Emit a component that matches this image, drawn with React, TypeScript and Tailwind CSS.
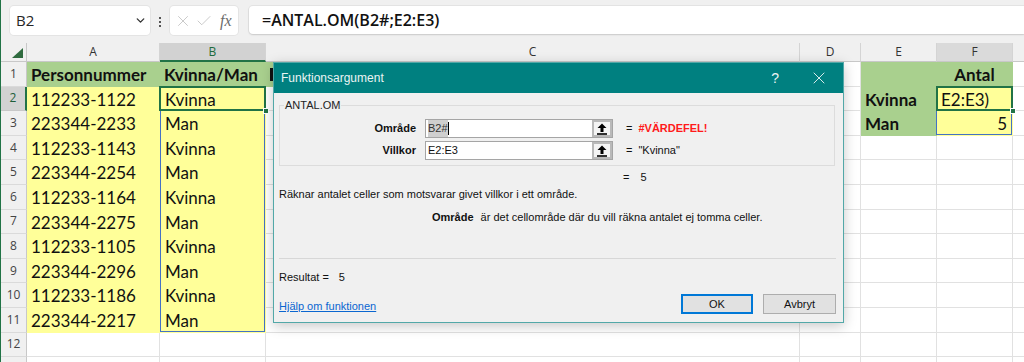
import React from 'react';
import { X, Check, ChevronDown } from 'lucide-react';

const people: [string, string][] = [
  ['112233-1122', 'Kvinna'],
  ['223344-2233', 'Man'],
  ['112233-1143', 'Kvinna'],
  ['223344-2254', 'Man'],
  ['112233-1164', 'Kvinna'],
  ['223344-2275', 'Man'],
  ['112233-1105', 'Kvinna'],
  ['223344-2296', 'Man'],
  ['112233-1186', 'Kvinna'],
  ['223344-2217', 'Man'],
];

const FILL = {
  white: 'bg-white border-[#e1e1e1]',
  green: 'bg-[#a9d08e] border-[#a9d08e]',
  yellow: 'bg-[#ffff99] border-[#ffff99]',
};

type Fill = keyof typeof FILL;

const Cell: React.FC<{ w: string; fill?: Fill; className?: string; children?: React.ReactNode }> = ({
  w,
  fill = 'white',
  className = '',
  children,
}) => (
  <div className={`${w} shrink-0 h-full relative flex items-center border-r border-b px-[4px] pt-[2px] text-[17px] text-[#111] whitespace-nowrap ${FILL[fill]} ${className}`}>
    {children}
  </div>
);

const RowHead: React.FC<{ n?: number; active?: boolean }> = ({ n, active }) => (
  <div
    className={`w-[26px] shrink-0 h-full flex items-center justify-center border-b text-[12px] font-['Open_Sans',sans-serif] ${
      active
        ? 'bg-[#d2d2d2] text-[#1e5e3a] border-[#c8c8c8] border-r-2 border-r-[#217346]'
        : 'bg-[#f0f0f0] text-[#444] border-[#dadada] border-r border-r-[#c8c8c8]'
    }`}
  >
    {n}
  </div>
);

const ColHead: React.FC<{ w: string; label?: string; mode?: 'sel' | 'hi' }> = ({ w, label, mode }) => (
  <div
    className={`${w} shrink-0 h-full flex items-center justify-center border-r border-[#d4d4d4] text-[12px] font-['Open_Sans',sans-serif] ${
      mode === 'sel'
        ? 'bg-[#d2d2d2] text-[#1e6b3c] border-b-2 border-b-[#217346]'
        : mode === 'hi'
        ? 'bg-[#dadada] text-[#333] border-b border-b-[#c8c8c8]'
        : 'bg-[#f0f0f0] text-[#333] border-b border-b-[#c8c8c8]'
    }`}
  >
    {label}
  </div>
);

const Handle = () => (
  <div className="absolute -right-[4px] -bottom-[4px] w-[6px] h-[6px] bg-[#217346] border border-white z-10" />
);

const UpArrow = () => (
  <svg width="10" height="12" viewBox="0 0 10 12">
    <path d="M5 0.5 L9.5 5 H6.5 V9 H3.5 V5 H0.5 Z" fill="#000" />
    <rect x="0" y="10.2" width="10" height="1.6" fill="#000" />
  </svg>
);

const FormulaBar = () => (
  <div className="h-[43px] bg-[#f0f0f0] flex items-start pt-[6px] pl-[9px] font-['Open_Sans',sans-serif]">
    <div className="w-[140px] h-[29px] bg-white rounded-[4px] shadow-[0_0_0_1px_#e4e4e4] flex items-center justify-between pl-[6px] pr-[3px]">
      <span className="text-[15px] text-[#262626]">B2</span>
      <ChevronDown size={13} strokeWidth={2.5} color="#333" />
    </div>
    <div className="ml-[9px] mt-[11px] flex flex-col gap-[2px]">
      <div className="w-[2px] h-[2px] bg-[#555]" />
      <div className="w-[2px] h-[2px] bg-[#555]" />
      <div className="w-[2px] h-[2px] bg-[#555]" />
    </div>
    <div className="ml-[9px] w-[68px] h-[29px] bg-white rounded-[4px] shadow-[0_0_0_1px_#e4e4e4] flex items-center pl-[4px] gap-[3px]">
      <X size={18} strokeWidth={1} color="#b8b8b8" />
      <Check size={18} strokeWidth={1} color="#b8b8b8" />
      <span className="ml-[4px] font-['Liberation_Serif',serif] italic text-[16px] text-[#6b6b6b]">fx</span>
    </div>
    <div className="ml-[11px] flex-1 h-[28px] bg-white rounded-l-[4px] shadow-[0_1px_2px_rgba(0,0,0,0.12),0_0_0_1px_#e4e4e4] flex items-center pl-[13px]">
      <span className="text-[16px] font-semibold text-[#111]">=ANTAL.OM(B2#;E2:E3)</span>
    </div>
  </div>
);

const Sheet = () => (
  <div className="font-['Lato',sans-serif]">
    <div className="h-[19px] flex">
      <div className="w-[26px] shrink-0 h-full bg-[#f0f0f0] border-r border-b border-[#c8c8c8] flex items-end justify-end pr-[3px] pb-[3px]">
        <svg width="11" height="10" viewBox="0 0 11 10">
          <polygon points="11,0 11,10 0,10" fill="#2f6b3f" />
        </svg>
      </div>
      <ColHead w="w-[133px]" label="A" />
      <ColHead w="w-[106px]" label="B" mode="sel" />
      <ColHead w="w-[534px]" label="C" />
      <ColHead w="w-[61px]" label="D" />
      <ColHead w="w-[76px]" label="E" />
      <ColHead w="w-[76px]" label="F" mode="hi" />
      <ColHead w="w-[40px]" />
    </div>

    {/* rad 1 */}
    <div className="h-[24.6px] flex">
      <RowHead n={1} />
      <Cell w="w-[133px]" fill="green" className="font-bold">Personnummer</Cell>
      <Cell w="w-[106px]" fill="green" className="font-bold">Kvinna/Man</Cell>
      <Cell w="w-[534px]" fill="green">
        <div className="w-[3px] h-[13px] bg-[#111]" />
      </Cell>
      <Cell w="w-[61px]" />
      <Cell w="w-[76px]" fill="green" />
      <Cell w="w-[76px]" fill="green" className="font-bold justify-center">Antal</Cell>
      <Cell w="w-[40px]" />
    </div>

    {people.map(([pnr, kon], i) => {
      const n = i + 2;
      return (
        <div key={n} className="h-[24.6px] flex">
          <RowHead n={n} active={n === 2} />
          <Cell w="w-[133px]" fill="yellow">{pnr}</Cell>
          <Cell w="w-[106px]" fill="yellow" className="pl-[5px]">
            {kon}
            {n === 2 ? (
              <>
                <div className="absolute -left-px -top-px -right-px -bottom-px border-2 border-[#217346] z-10" />
                <Handle />
              </>
            ) : (
              <div className={`absolute inset-x-0 -top-px bottom-0 border-x border-[#4472c4] ${n === 11 ? 'border-b' : ''}`} />
            )}
          </Cell>
          <Cell w="w-[534px]" />
          <Cell w="w-[61px]" />
          {n === 2 && (
            <>
              <Cell w="w-[76px]" fill="green" className="font-bold">Kvinna</Cell>
              <Cell w="w-[76px]" fill="yellow">
                E2:E3)
                <div className="absolute -left-px -top-px -right-px -bottom-px border-2 border-[#217346] z-10" />
                <Handle />
              </Cell>
            </>
          )}
          {n === 3 && (
            <>
              <Cell w="w-[76px]" fill="green" className="font-bold">Man</Cell>
              <Cell w="w-[76px]" fill="yellow" className="justify-end pr-[5px]">
                5
                <div className="absolute -left-px -top-px right-0 bottom-0 border-x border-b border-[#4472c4]" />
              </Cell>
            </>
          )}
          {n > 3 && (
            <>
              <Cell w="w-[76px]" />
              <Cell w="w-[76px]" />
            </>
          )}
          <Cell w="w-[40px]" />
        </div>
      );
    })}

    {[12, 0].map((n) => (
      <div key={n} className="h-[24.6px] flex">
        <RowHead n={n || undefined} />
        <Cell w="w-[133px]" />
        <Cell w="w-[106px]" />
        <Cell w="w-[534px]" />
        <Cell w="w-[61px]" />
        <Cell w="w-[76px]" />
        <Cell w="w-[76px]" />
        <Cell w="w-[40px]" />
      </div>
    ))}
  </div>
);

const ArgInput: React.FC<{ children: React.ReactNode }> = ({ children }) => (
  <div className="ml-[9px] w-[188px] h-[19px] flex border border-[#a5a5a5] bg-white">
    <div className="flex-1 flex items-center pl-[2px] text-[11px]">{children}</div>
    <div className="w-[20px] h-full border-2 border-[#b9b9b9] bg-[#f4f4f4] flex items-center justify-center">
      <UpArrow />
    </div>
  </div>
);

const Dialog = () => (
  <div className="absolute left-[272px] top-[62px] w-[571px] h-[261px] z-20 bg-[#f0f0f0] border border-[#52a8a8] shadow-[0_3px_12px_rgba(0,0,0,0.22)] font-['Liberation_Sans',Arial,sans-serif] text-[11px] text-[#111] flex flex-col">
    <div className="h-[30px] shrink-0 bg-[#008080] flex items-center pl-[7px] pr-[14px] text-white">
      <span className="text-[12px] text-[#eaf4f4]">Funktionsargument</span>
      <span className="ml-auto text-[14px] text-[#eaf4f4]">?</span>
      <X className="ml-[30px]" size={20} strokeWidth={1.1} color="#eaf4f4" />
    </div>

    <div className="pl-[5px] pr-[8px] flex flex-col">
      <div className="relative mt-[12px] w-[556px] h-[61px] border border-[#dcdcdc] flex flex-col pt-[13px] gap-[3px]">
        <span className="absolute -top-[7px] left-[4px] px-[1px] bg-[#f0f0f0] text-[11px] leading-[13px] text-[#222]">ANTAL.OM</span>
        <div className="flex items-center">
          <span className="w-[136px] text-right font-bold">Område</span>
          <ArgInput>
            <span className="bg-[#cfcfcf] text-[#333]">B2#</span>
            <span className="w-px h-[13px] bg-black" />
          </ArgInput>
          <span className="ml-[13px]">=</span>
          <span className="ml-[6px] font-bold text-[#ff1a1a]">#VÄRDEFEL!</span>
        </div>
        <div className="flex items-center">
          <span className="w-[136px] text-right font-bold">Villkor</span>
          <ArgInput>E2:E3</ArgInput>
          <span className="ml-[13px]">=</span>
          <span className="ml-[6px]">"Kvinna"</span>
        </div>
      </div>

      <div className="mt-[4px] h-[14px] flex items-center pl-[344px]">
        <span>=</span>
        <span className="ml-[11px]">5</span>
      </div>
      <div className="mt-[3px] h-[14px] flex items-center">
        Räknar antalet celler som motsvarar givet villkor i ett område.
      </div>
      <div className="mt-[9px] h-[14px] flex items-center pl-[153px]">
        <span className="font-bold">Område</span>
        <span className="ml-[7px]">är det cellområde där du vill räkna antalet ej tomma celler.</span>
      </div>

      <div className="mt-[34px] h-px w-[557px] bg-[#d7d7d7]" />

      <div className="mt-[11px] h-[14px] flex items-center">
        <span>Resultat =</span>
        <span className="ml-[10px]">5</span>
      </div>

      <div className="mt-[10px] h-[20px] flex items-center">
        <span className="mt-[4px] text-[#0a66d0] underline">Hjälp om funktionen</span>
        <button className="ml-auto w-[72px] h-[20px] bg-[#e1e1e1] border-2 border-[#0078d7] text-[11px] text-[#111]">OK</button>
        <button className="ml-[10px] mr-[-1px] w-[73px] h-[20px] bg-[#e1e1e1] border border-[#adadad] text-[11px] text-[#111]">Avbryt</button>
      </div>
    </div>
  </div>
);

export default function App() {
  return (
    <div className="relative w-[1024px] h-[362px] overflow-hidden bg-white border-l border-[#217346]">
      <FormulaBar />
      <Sheet />
      <Dialog />
    </div>
  );
}
